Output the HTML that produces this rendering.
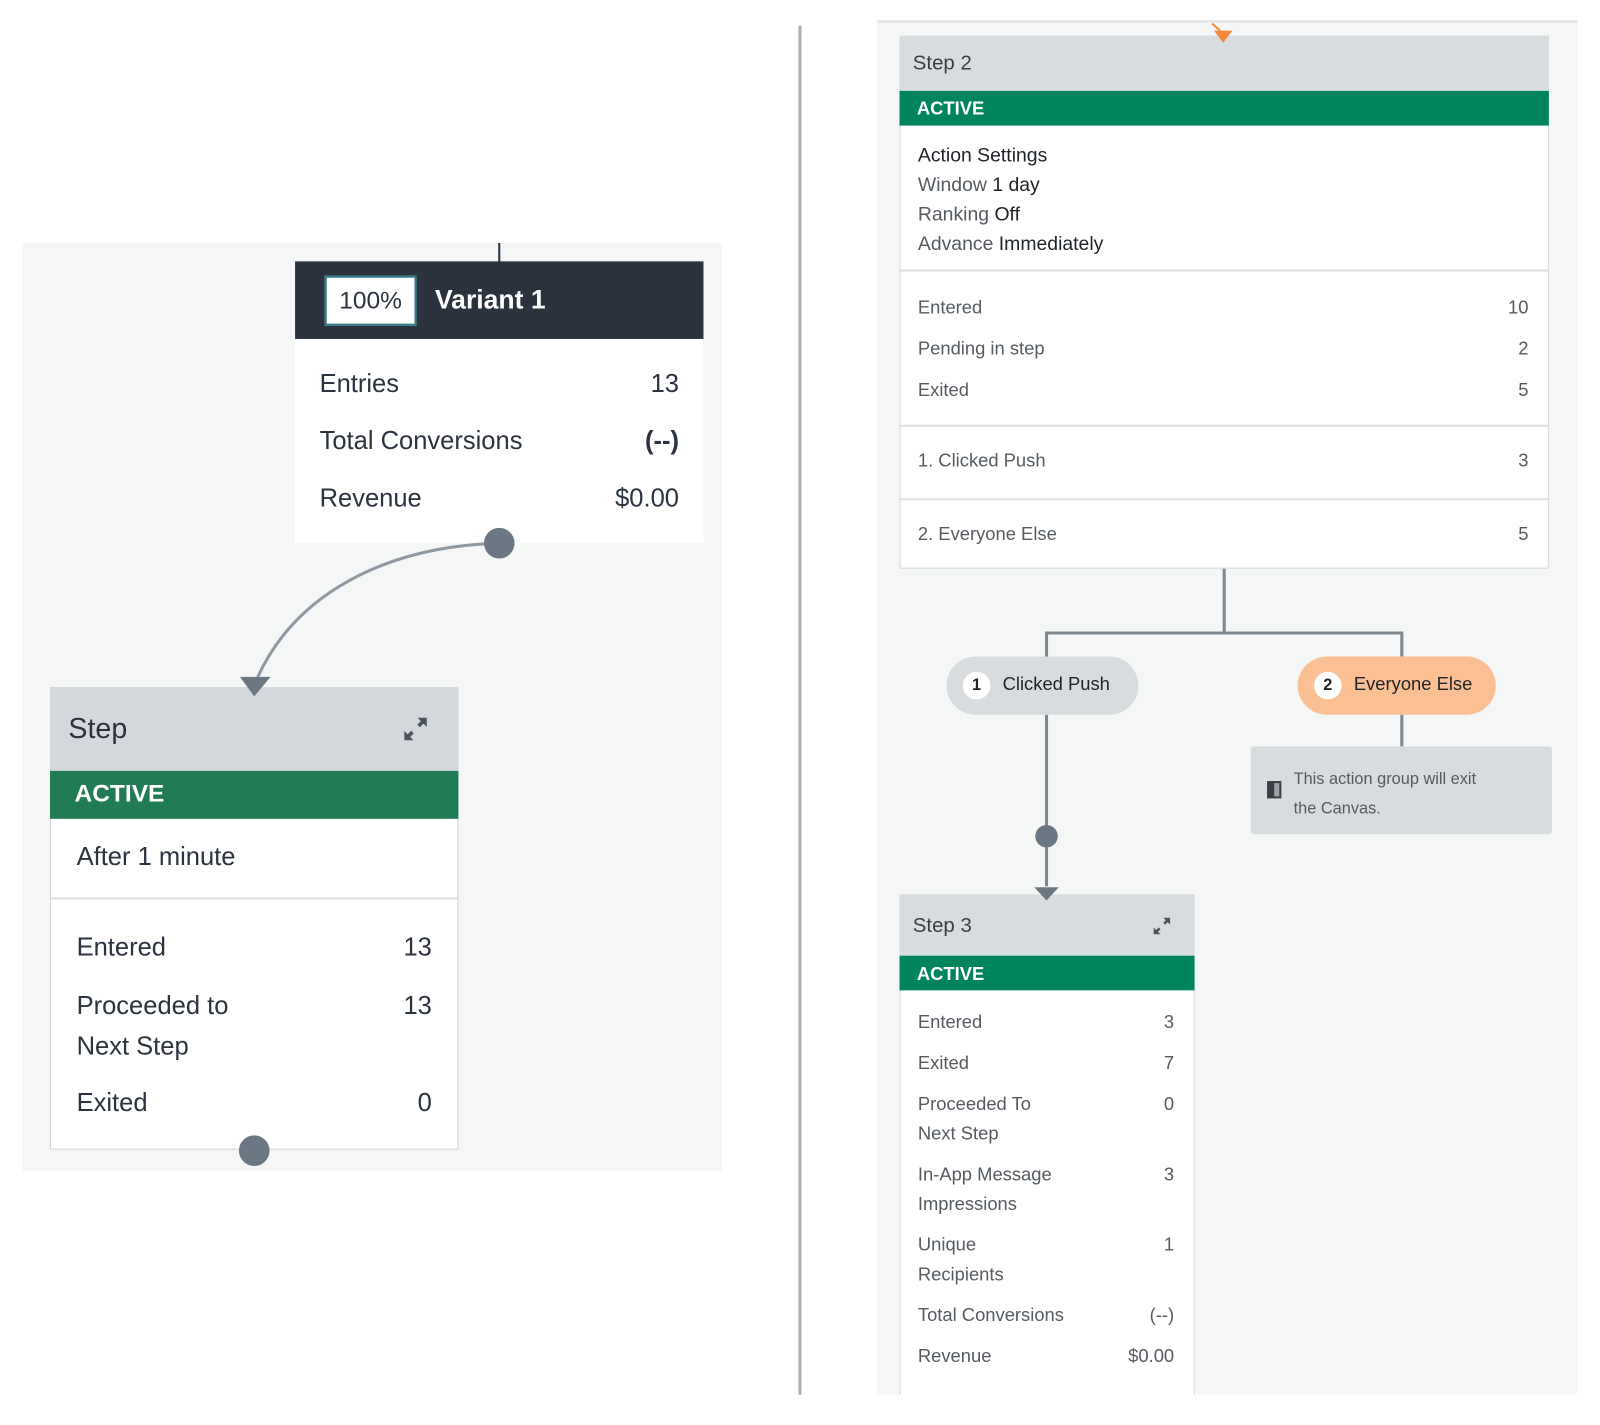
<!DOCTYPE html>
<html><head><meta charset="utf-8">
<style>
*{box-sizing:border-box;margin:0;padding:0}
html,body{width:1600px;height:1413px;overflow:hidden;background:#fff}
body{font-family:"Liberation Sans",sans-serif;color:#3a3f45}
#w{position:absolute;left:0;top:0;width:1570px;height:1390px;transform:scale(1.021);transform-origin:0 0}
.a{position:absolute}
.row{position:absolute;display:flex;justify-content:space-between}
</style></head><body><div id="w">
<!-- left panel -->
<div class="a" style="left:22px;top:238px;width:685px;height:909px;background:#f5f7f7"></div>
<div class="a" style="left:488px;top:238px;width:2px;height:20px;background:#2b333e"></div>
<div class="a" style="left:289px;top:256px;width:400px;height:76px;background:#2b333e"></div>
<div class="a" style="left:318px;top:270px;width:90px;height:49px;background:#fff;border:2px solid #2a7d8a;font-size:24px;color:#2b333e;display:flex;align-items:center;justify-content:center">100%</div>
<div class="a" style="left:426px;top:278px;font-size:26px;font-weight:bold;color:#fff">Variant 1</div>
<div class="a" style="left:289px;top:332px;width:400px;height:200px;background:#fff"></div>
<div class="row" style="left:313px;top:362px;width:352px;font-size:25px;color:#2b333e"><span>Entries</span><span>13</span></div>
<div class="row" style="left:313px;top:418px;width:352px;font-size:25px;color:#2b333e"><span>Total Conversions</span><span style="font-weight:bold">(--)</span></div>
<div class="row" style="left:313px;top:474px;width:352px;font-size:25px;color:#2b333e"><span>Revenue</span><span>$0.00</span></div>
<div class="a" style="left:49px;top:673px;width:400px;height:453px;background:#fff;border:1px solid #cfd3d6"></div>
<div class="a" style="left:49px;top:673px;width:400px;height:82px;background:#d4d8dc"></div>
<svg class="a" style="left:0;top:0" width="1560" height="1378">
<path d="M489 532 C380 535 290 580 252 664" fill="none" stroke="#8e99a2" stroke-width="3"/>
<polygon points="235,663 265,663 249,682" fill="#6b7884"/>
<circle cx="489" cy="532" r="15" fill="#6b7884"/>
</svg>
<div class="a" style="left:67px;top:698px;font-size:28px;color:#2b333e">Step</div>
<svg class="a" style="left:392px;top:699px" width="30" height="30" viewBox="0 0 30 30"><g stroke="#48555f" stroke-width="3.5" fill="#48555f"><line x1="7" y1="23" x2="12" y2="18"/><line x1="18" y1="12" x2="23" y2="7"/></g><polygon points="17,4 26,4 26,13" fill="#48555f"/><polygon points="4,17 4,26 13,26" fill="#48555f"/></svg>
<div class="a" style="left:49px;top:755px;width:400px;height:47px;background:#217c55"></div>
<div class="a" style="left:73px;top:764px;font-size:24px;font-weight:bold;color:#fff">ACTIVE</div>
<div class="a" style="left:75px;top:825px;font-size:25px;color:#2b333e">After 1 minute</div>
<div class="a" style="left:50px;top:879px;width:398px;height:2px;background:#dcdfe2"></div>
<div class="row" style="left:75px;top:914px;width:348px;font-size:25px;color:#2b333e"><span>Entered</span><span>13</span></div>
<div class="row" style="left:75px;top:965px;width:348px;font-size:25px;color:#2b333e;line-height:40px"><span>Proceeded to<br>Next Step</span><span>13</span></div>
<div class="row" style="left:75px;top:1066px;width:348px;font-size:25px;color:#2b333e"><span>Exited</span><span>0</span></div>
<div class="a" style="left:234px;top:1112px;width:30px;height:30px;border-radius:50%;background:#6b7884"></div>
<!-- separator -->
<div class="a" style="left:782px;top:25px;width:3px;height:1342px;background:#a9aeb2"></div>
<!-- right panel -->
<div class="a" style="left:859px;top:20px;width:686px;height:1346px;background:#f5f7f7;border-top:2px solid #dde0e3"></div>
<div class="a" style="left:881px;top:35px;width:636px;height:522px;background:#fff;border:1px solid #d4d8dc"></div>
<div class="a" style="left:881px;top:35px;width:636px;height:54px;background:#d9dcdf"></div>
<svg class="a" style="left:1185px;top:22px" width="26" height="22"><line x1="2" y1="1" x2="10" y2="8" stroke="#f58a3c" stroke-width="2"/><polygon points="4,8 22,8 13,20" fill="#f58a3c"/></svg>
<div class="a" style="left:894px;top:51px;font-size:20px;color:#3a3f45">Step 2</div>
<div class="a" style="left:881px;top:89px;width:636px;height:34px;background:#00845e"></div>
<div class="a" style="left:898px;top:96px;font-size:18px;font-weight:bold;color:#fff">ACTIVE</div>
<div class="a" style="left:899px;top:138px;font-size:19px;line-height:29px;color:#555b61">
<div style="color:#1e2328">Action Settings</div>
<div>Window <span style="color:#1e2328">1 day</span></div>
<div>Ranking <span style="color:#1e2328">Off</span></div>
<div>Advance <span style="color:#1e2328">Immediately</span></div></div>
<div class="a" style="left:882px;top:264px;width:634px;height:2px;background:#dde0e3"></div>
<div class="a" style="left:882px;top:416px;width:634px;height:2px;background:#dde0e3"></div>
<div class="a" style="left:882px;top:488px;width:634px;height:2px;background:#dde0e3"></div>
<div class="row" style="left:899px;top:291px;width:598px;font-size:18px;color:#555b61"><span>Entered</span><span>10</span></div>
<div class="row" style="left:899px;top:331px;width:598px;font-size:18px;color:#555b61"><span>Pending in step</span><span>2</span></div>
<div class="row" style="left:899px;top:372px;width:598px;font-size:18px;color:#555b61"><span>Exited</span><span>5</span></div>
<div class="row" style="left:899px;top:441px;width:598px;font-size:18px;color:#555b61"><span>1. Clicked Push</span><span>3</span></div>
<div class="row" style="left:899px;top:513px;width:598px;font-size:18px;color:#555b61"><span>2. Everyone Else</span><span>5</span></div>
<div class="a" style="left:881px;top:876px;width:289px;height:500px;background:#fff;border:1px solid #d4d8dc"></div>
<div class="a" style="left:881px;top:876px;width:289px;height:60px;background:#d9dcdf"></div>
<svg class="a" style="left:0;top:0" width="1560" height="1378">
<g stroke="#7d8891" stroke-width="3" fill="none">
<path d="M1199 557 V620 M1025 643 V620 H1373 V643"/>
<path d="M1373 700 V731"/>
<path d="M1025 700 V868"/></g>
<circle cx="1025" cy="819" r="11" fill="#6b7884"/>
<polygon points="1013,869 1037,869 1025,882" fill="#6b7884"/>
</svg>
<div class="a" style="left:927px;top:643px;width:188px;height:57px;border-radius:29px;background:#d9dcdf"></div>
<div class="a" style="left:943px;top:658px;width:27px;height:27px;border-radius:50%;background:#fff;font-size:16px;font-weight:bold;display:flex;align-items:center;justify-content:center;color:#1e2328">1</div>
<div class="a" style="left:982px;top:660px;font-size:18px;color:#1e2328">Clicked Push</div>
<div class="a" style="left:1271px;top:643px;width:194px;height:57px;border-radius:29px;background:#fbbf94"></div>
<div class="a" style="left:1287px;top:658px;width:27px;height:27px;border-radius:50%;background:#fff;font-size:16px;font-weight:bold;display:flex;align-items:center;justify-content:center;color:#1e2328">2</div>
<div class="a" style="left:1326px;top:660px;font-size:18px;color:#1e2328">Everyone Else</div>
<div class="a" style="left:1225px;top:731px;width:295px;height:86px;background:#d9dcdf;border-radius:3px"></div>
<svg class="a" style="left:1240px;top:764px" width="17" height="20"><rect x="1" y="1" width="14" height="17" fill="#3a3f45"/><rect x="8" y="3" width="5" height="13" fill="#9aa2a8"/></svg>
<div class="a" style="left:1267px;top:749px;font-size:16px;line-height:29px;color:#555b61">This action group will exit<br>the Canvas.</div>
<div class="a" style="left:894px;top:896px;font-size:20px;color:#3a3f45">Step 3</div>
<svg class="a" style="left:1127px;top:896px" width="22" height="22" viewBox="0 0 30 30"><g stroke="#48555f" stroke-width="3.5"><line x1="7" y1="23" x2="12" y2="18"/><line x1="18" y1="12" x2="23" y2="7"/></g><polygon points="17,4 26,4 26,13" fill="#48555f"/><polygon points="4,17 4,26 13,26" fill="#48555f"/></svg>
<div class="a" style="left:881px;top:936px;width:289px;height:34px;background:#00845e"></div>
<div class="a" style="left:898px;top:944px;font-size:18px;font-weight:bold;color:#fff">ACTIVE</div>
<div class="a" style="left:899px;top:987px;width:251px;font-size:18px;line-height:29px;color:#555b61">
<div style="display:flex;justify-content:space-between;margin-bottom:11px"><span>Entered</span><span>3</span></div>
<div style="display:flex;justify-content:space-between;margin-bottom:11px"><span>Exited</span><span>7</span></div>
<div style="display:flex;justify-content:space-between;margin-bottom:11px"><span>Proceeded To<br>Next Step</span><span>0</span></div>
<div style="display:flex;justify-content:space-between;margin-bottom:11px"><span>In-App Message<br>Impressions</span><span>3</span></div>
<div style="display:flex;justify-content:space-between;margin-bottom:11px"><span>Unique<br>Recipients</span><span>1</span></div>
<div style="display:flex;justify-content:space-between;margin-bottom:11px"><span>Total Conversions</span><span>(--)</span></div>
<div style="display:flex;justify-content:space-between"><span>Revenue</span><span>$0.00</span></div>
</div>
<div class="a" style="left:0;top:1366px;width:1570px;height:30px;background:#fff"></div>
</div></body></html>
